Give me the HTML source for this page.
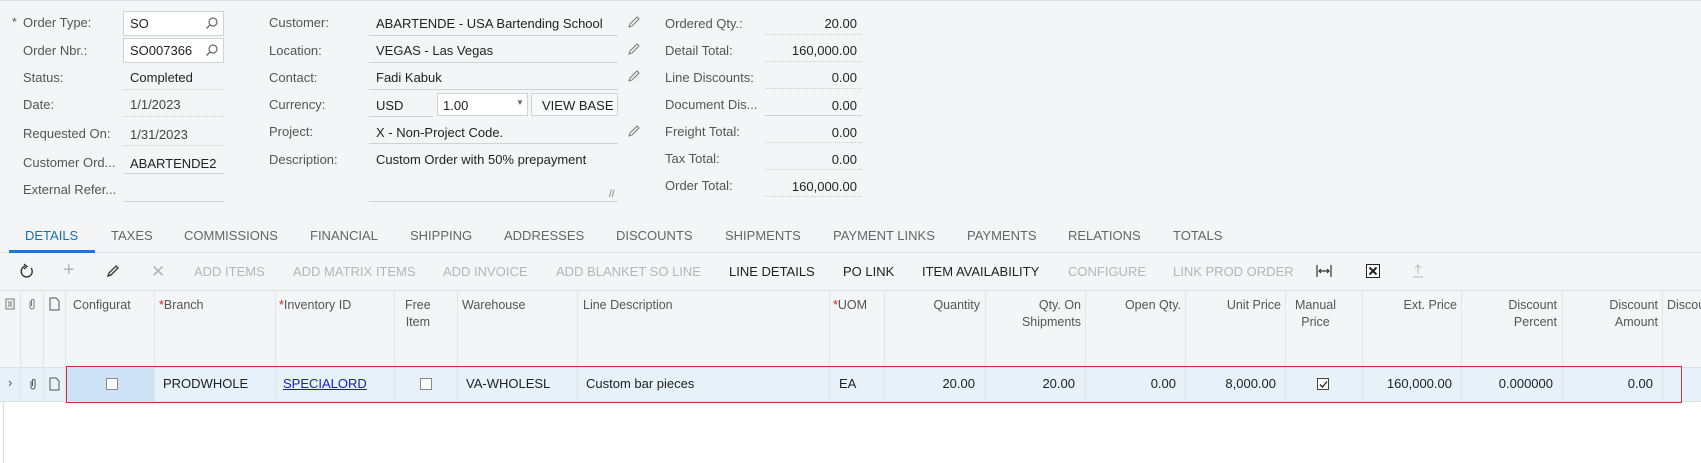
<!DOCTYPE html>
<html><head><meta charset="utf-8"><style>
*{box-sizing:border-box;margin:0;padding:0}
body{width:1701px;height:463px;background:#fff;font-family:"Liberation Sans",Arial,sans-serif;font-size:13px;color:#222;position:relative;overflow:hidden}
.a{position:absolute;white-space:nowrap}
.top{position:absolute;left:0;top:0;width:1701px;height:400px;background:#f4f5f7;border-top:1px solid #dcdcdc}
.lbl{color:#555}
.ul{position:absolute;height:0;border-bottom:1px solid #cfd3d8}
.dot{position:absolute;height:0;border-bottom:1px dotted #c8ccd0}
.box{position:absolute;background:#fff;border:1px solid #cfd3d8}
.tab{color:#666;font-size:13px}
.tb{color:#222;font-size:13px}
.dis{color:#b3b6ba}
.vl{position:absolute;top:291px;height:110px;border-left:1px solid #e2e4e7}
.h{color:#555;font-size:12.5px;line-height:17px}
.r{text-align:right}
.cb{position:absolute;width:12px;height:12px;border:1px solid #888;background:#fff}
</style></head><body>
<div class="top"></div>
<div class="a" style="left:0;top:400px;width:4px;height:63px;border-right:1px solid #ddd"></div>

<!-- left form -->
<div class="a lbl" style="left:12px;top:15px;font-size:12px">*</div>
<div class="a lbl" style="left:23px;top:15px">Order Type:</div>
<div class="a lbl" style="left:23px;top:43px">Order Nbr.:</div>
<div class="a lbl" style="left:23px;top:70px">Status:</div>
<div class="a lbl" style="left:23px;top:97px">Date:</div>
<div class="a lbl" style="left:23px;top:126px">Requested On:</div>
<div class="a lbl" style="left:23px;top:155px">Customer Ord...</div>
<div class="a lbl" style="left:23px;top:182px">External Refer...</div>
<div class="box" style="left:123px;top:11px;width:101px;height:25px"></div>
<div class="a" style="left:130px;top:16px">SO</div>
<svg class="a" style="left:205px;top:16px" width="14" height="14"><circle cx="8" cy="6" r="4" fill="none" stroke="#666" stroke-width="1.2"/><path d="M5 9L1.5 12.5" stroke="#666" stroke-width="1.3"/></svg>
<div class="box" style="left:123px;top:38px;width:101px;height:25px"></div>
<div class="a" style="left:130px;top:43px">SO007366</div>
<svg class="a" style="left:205px;top:43px" width="14" height="14"><circle cx="8" cy="6" r="4" fill="none" stroke="#666" stroke-width="1.2"/><path d="M5 9L1.5 12.5" stroke="#666" stroke-width="1.3"/></svg>
<div class="a" style="left:130px;top:70px">Completed</div>
<div class="dot" style="left:123px;top:89px;width:101px"></div>
<div class="a" style="left:130px;top:97px;color:#444">1/1/2023</div>
<div class="dot" style="left:123px;top:116px;width:101px"></div>
<div class="a" style="left:130px;top:127px;color:#444">1/31/2023</div>
<div class="dot" style="left:123px;top:145px;width:101px"></div>
<div class="a" style="left:130px;top:156px">ABARTENDE2</div>
<div class="ul" style="left:123px;top:173px;width:101px"></div>
<div class="ul" style="left:123px;top:201px;width:101px"></div>

<!-- middle -->
<div class="a lbl" style="left:269px;top:15px">Customer:</div>
<div class="a lbl" style="left:269px;top:43px">Location:</div>
<div class="a lbl" style="left:269px;top:70px">Contact:</div>
<div class="a lbl" style="left:269px;top:97px">Currency:</div>
<div class="a lbl" style="left:269px;top:124px">Project:</div>
<div class="a lbl" style="left:269px;top:152px">Description:</div>
<div class="a" style="left:376px;top:16px">ABARTENDE - USA Bartending School</div>
<div class="ul" style="left:369px;top:35px;width:249px"></div>
<div class="a" style="left:376px;top:43px">VEGAS - Las Vegas</div>
<div class="ul" style="left:369px;top:62px;width:249px"></div>
<div class="a" style="left:376px;top:70px">Fadi Kabuk</div>
<div class="ul" style="left:369px;top:89px;width:249px"></div>
<div class="a" style="left:376px;top:98px">USD</div>
<div class="ul" style="left:369px;top:116px;width:64px"></div>
<div class="box" style="left:437px;top:93px;width:91px;height:23px"></div>
<div class="a" style="left:443px;top:98px">1.00</div>
<div class="a" style="left:516px;top:98px;font-size:8px;color:#666">&#9660;</div>
<div class="box" style="left:531px;top:93px;width:87px;height:23px;background:#f8f9fa"></div>
<div class="a" style="left:542px;top:98px">VIEW BASE</div>
<div class="a" style="left:376px;top:125px">X - Non-Project Code.</div>
<div class="ul" style="left:369px;top:143px;width:249px"></div>
<div class="a" style="left:376px;top:152px">Custom Order with 50% prepayment</div>
<div class="ul" style="left:369px;top:201px;width:249px"></div>
<div class="a" style="left:609px;top:189px;font-size:10px;color:#777">//</div>
<svg class="a" style="left:627px;top:15px" width="14" height="14"><path d="M2 12 L3 9 L10 2 L12 4 L5 11 Z" fill="none" stroke="#777"/></svg>
<svg class="a" style="left:627px;top:42px" width="14" height="14"><path d="M2 12 L3 9 L10 2 L12 4 L5 11 Z" fill="none" stroke="#777"/></svg>
<svg class="a" style="left:627px;top:69px" width="14" height="14"><path d="M2 12 L3 9 L10 2 L12 4 L5 11 Z" fill="none" stroke="#777"/></svg>
<svg class="a" style="left:627px;top:124px" width="14" height="14"><path d="M2 12 L3 9 L10 2 L12 4 L5 11 Z" fill="none" stroke="#777"/></svg>

<!-- right totals -->
<div class="a lbl" style="left:665px;top:16px">Ordered Qty.:</div>
<div class="a lbl" style="left:665px;top:43px">Detail Total:</div>
<div class="a lbl" style="left:665px;top:70px">Line Discounts:</div>
<div class="a lbl" style="left:665px;top:97px">Document Dis...</div>
<div class="a lbl" style="left:665px;top:124px">Freight Total:</div>
<div class="a lbl" style="left:665px;top:151px">Tax Total:</div>
<div class="a lbl" style="left:665px;top:178px">Order Total:</div>
<div class="a r" style="left:757px;width:100px;top:16px">20.00</div>
<div class="a r" style="left:757px;width:100px;top:43px">160,000.00</div>
<div class="a r" style="left:757px;width:100px;top:70px">0.00</div>
<div class="a r" style="left:757px;width:100px;top:98px">0.00</div>
<div class="a r" style="left:757px;width:100px;top:125px">0.00</div>
<div class="a r" style="left:757px;width:100px;top:152px">0.00</div>
<div class="a r" style="left:757px;width:100px;top:179px">160,000.00</div>
<div class="dot" style="left:765px;top:34px;width:97px"></div>
<div class="dot" style="left:765px;top:61px;width:97px"></div>
<div class="dot" style="left:765px;top:88px;width:97px"></div>
<div class="ul" style="left:765px;top:115px;width:97px"></div>
<div class="dot" style="left:765px;top:142px;width:97px"></div>
<div class="dot" style="left:765px;top:169px;width:97px"></div>
<div class="dot" style="left:765px;top:196px;width:97px"></div>

<!-- tabs -->
<div class="a tab" style="left:25px;top:228px;color:#1a6cb0">DETAILS</div>
<div class="a tab" style="left:111px;top:228px">TAXES</div>
<div class="a tab" style="left:184px;top:228px">COMMISSIONS</div>
<div class="a tab" style="left:310px;top:228px">FINANCIAL</div>
<div class="a tab" style="left:410px;top:228px">SHIPPING</div>
<div class="a tab" style="left:504px;top:228px">ADDRESSES</div>
<div class="a tab" style="left:616px;top:228px">DISCOUNTS</div>
<div class="a tab" style="left:725px;top:228px">SHIPMENTS</div>
<div class="a tab" style="left:833px;top:228px">PAYMENT LINKS</div>
<div class="a tab" style="left:967px;top:228px">PAYMENTS</div>
<div class="a tab" style="left:1068px;top:228px">RELATIONS</div>
<div class="a tab" style="left:1173px;top:228px">TOTALS</div>
<div class="a" style="left:0;top:252px;width:1701px;border-bottom:1px solid #dcdee2"></div>
<div class="a" style="left:9px;top:250px;width:86px;height:3px;background:#1a7ac8"></div>

<!-- toolbar -->
<svg class="a" style="left:19px;top:263px" width="16" height="16"><path d="M12 5 A5.5 5.5 0 1 1 6 3.2" fill="none" stroke="#333" stroke-width="1.4"/><path d="M5 1 L8 3.5 L5 6" fill="none" stroke="#333" stroke-width="1.3"/></svg>
<div class="a dis" style="left:63px;top:260px;font-size:20px;line-height:20px">+</div>
<svg class="a" style="left:106px;top:264px" width="14" height="14"><path d="M2 12 L3 9 L10 2 L12 4 L5 11 Z" fill="none" stroke="#333" stroke-width="1.3"/></svg>
<div class="a dis" style="left:151px;top:262px;font-size:17px">✕</div>
<div class="a tb dis" style="left:194px;top:264px">ADD ITEMS</div>
<div class="a tb dis" style="left:293px;top:264px">ADD MATRIX ITEMS</div>
<div class="a tb dis" style="left:443px;top:264px">ADD INVOICE</div>
<div class="a tb dis" style="left:556px;top:264px">ADD BLANKET SO LINE</div>
<div class="a tb" style="left:729px;top:264px">LINE DETAILS</div>
<div class="a tb" style="left:843px;top:264px">PO LINK</div>
<div class="a tb" style="left:922px;top:264px">ITEM AVAILABILITY</div>
<div class="a tb dis" style="left:1068px;top:264px">CONFIGURE</div>
<div class="a tb dis" style="left:1173px;top:264px">LINK PROD ORDER</div>
<svg class="a" style="left:1316px;top:264px" width="16" height="14"><path d="M1 1V13M15 1V13M3 7H13M5 5L3 7L5 9M11 5L13 7L11 9" fill="none" stroke="#333" stroke-width="1.2"/></svg>
<svg class="a" style="left:1366px;top:264px" width="14" height="14"><rect x="0.5" y="0.5" width="13" height="13" fill="#fff" stroke="#222"/><path d="M3.5 3.5L10.5 10.5M10.5 3.5L3.5 10.5" stroke="#222" stroke-width="2"/></svg>
<svg class="a" style="left:1411px;top:263px" width="14" height="16"><path d="M7 2V11M4 5L7 2L10 5M2 14H12" fill="none" stroke="#c0c3c7" stroke-width="1.2"/></svg>
<div class="a" style="left:0;top:290px;width:1701px;border-bottom:1px solid #dcdee2"></div>

<!-- grid -->
<div class="a" style="left:0;top:367px;width:1701px;height:35px;background:#e6f1fa;border-top:1px solid #dde0e4;border-bottom:1px solid #dde0e4"></div>
<div class="a" style="left:66px;top:368px;width:88px;height:33px;background:#cde2f4"></div>
<div class="vl" style="left:20px"></div><div class="vl" style="left:43px"></div><div class="vl" style="left:65px"></div>
<div class="vl" style="left:154px"></div><div class="vl" style="left:275px"></div><div class="vl" style="left:394px"></div>
<div class="vl" style="left:457px"></div><div class="vl" style="left:577px"></div><div class="vl" style="left:829px"></div>
<div class="vl" style="left:884px"></div><div class="vl" style="left:985px"></div><div class="vl" style="left:1085px"></div>
<div class="vl" style="left:1185px"></div><div class="vl" style="left:1285px"></div><div class="vl" style="left:1362px"></div>
<div class="vl" style="left:1461px"></div><div class="vl" style="left:1562px"></div><div class="vl" style="left:1662px"></div>

<svg class="a" style="left:5px;top:298px" width="10" height="12"><rect x="1" y="1" width="8" height="10" fill="none" stroke="#777"/><path d="M3 4H7M3 6H7M3 8H7" stroke="#777"/></svg>
<svg class="a" style="left:27px;top:297px" width="10" height="14"><path d="M3 4V10A2 2 0 0 0 7 10V3A1.5 1.5 0 0 0 4.5 3V9" fill="none" stroke="#777"/></svg>
<svg class="a" style="left:49px;top:297px" width="11" height="14"><path d="M1 1H7L10 4V13H1Z" fill="none" stroke="#555"/></svg>
<div class="a h" style="left:73px;top:297px">Configurat</div>
<div class="a h" style="left:159px;top:297px"><span style="color:#d22">*</span>Branch</div>
<div class="a h" style="left:279px;top:297px"><span style="color:#d22">*</span>Inventory ID</div>
<div class="a h" style="left:405px;top:297px;text-align:center">Free<br>Item</div>
<div class="a h" style="left:462px;top:297px">Warehouse</div>
<div class="a h" style="left:583px;top:297px">Line Description</div>
<div class="a h" style="left:833px;top:297px"><span style="color:#d22">*</span>UOM</div>
<div class="a h r" style="left:880px;width:100px;top:297px">Quantity</div>
<div class="a h r" style="left:981px;width:100px;top:297px">Qty. On<br>Shipments</div>
<div class="a h r" style="left:1081px;width:100px;top:297px">Open Qty.</div>
<div class="a h r" style="left:1181px;width:100px;top:297px">Unit Price</div>
<div class="a h" style="left:1295px;top:297px;text-align:center">Manual<br>Price</div>
<div class="a h r" style="left:1357px;width:100px;top:297px">Ext. Price</div>
<div class="a h r" style="left:1457px;width:100px;top:297px">Discount<br>Percent</div>
<div class="a h r" style="left:1558px;width:100px;top:297px">Discount<br>Amount</div>
<div class="a h" style="left:1667px;top:297px">Discou</div>

<div class="a" style="left:8px;top:375px;color:#555;font-size:13px">›</div>
<svg class="a" style="left:28px;top:377px" width="10" height="14"><path d="M3 4V10A2 2 0 0 0 7 10V3A1.5 1.5 0 0 0 4.5 3V9" fill="none" stroke="#555"/></svg>
<svg class="a" style="left:49px;top:377px" width="11" height="14"><path d="M1 1H7L10 4V13H1Z" fill="none" stroke="#555"/></svg>
<div class="cb" style="left:106px;top:378px"></div>
<div class="a" style="left:163px;top:376px">PRODWHOLE</div>
<div class="a" style="left:283px;top:376px;color:#1a1ad0;text-decoration:underline">SPECIALORD</div>
<div class="cb" style="left:420px;top:378px"></div>
<div class="a" style="left:466px;top:376px">VA-WHOLESL</div>
<div class="a" style="left:586px;top:376px">Custom bar pieces</div>
<div class="a" style="left:839px;top:376px">EA</div>
<div class="a r" style="left:875px;width:100px;top:376px">20.00</div>
<div class="a r" style="left:975px;width:100px;top:376px">20.00</div>
<div class="a r" style="left:1076px;width:100px;top:376px">0.00</div>
<div class="a r" style="left:1176px;width:100px;top:376px">8,000.00</div>
<div class="cb" style="left:1317px;top:378px;border-color:#444"></div>
<svg class="a" style="left:1318px;top:379px" width="11" height="11"><path d="M2 5.5L4.5 8L9 2.5" fill="none" stroke="#222" stroke-width="1.3"/></svg>
<div class="a r" style="left:1352px;width:100px;top:376px">160,000.00</div>
<div class="a r" style="left:1453px;width:100px;top:376px">0.000000</div>
<div class="a r" style="left:1553px;width:100px;top:376px">0.00</div>

<div class="a" style="left:66px;top:366px;width:1616px;height:37px;border:1.5px solid #d0303a"></div>
</body></html>
